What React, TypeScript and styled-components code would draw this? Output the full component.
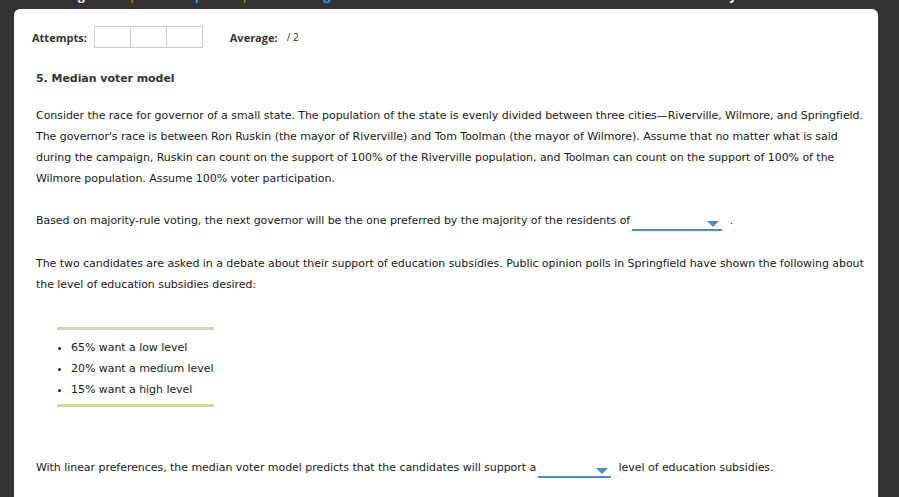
import styled, { createGlobalStyle } from 'styled-components'

const GlobalStyle = createGlobalStyle`
  html, body {
    margin: 0;
    padding: 0;
    background: #333333;
    overflow: hidden;
  }
`

const Page = styled.div`
  width: 899px;
  height: 497px;
  background: #333333;
  display: flex;
  flex-direction: column;
`

const TopBar = styled.div`
  height: 9px;
  overflow: hidden;
  padding: 0 37px 0 15px;
`

const TopRow = styled.div`
  display: flex;
  justify-content: space-between;
  margin-top: -11px;
  line-height: 14px;
  font-family: 'Open Sans', 'DejaVu Sans', sans-serif;
  font-weight: 700;
  font-size: 12px;
  color: #ffffff;
`

const Sep = styled.span`
  color: #e8b838;
  margin: 0 4px;
  font-weight: 400;
`

const NavLink = styled.span`
  color: #2ea6e8;
`

const Card = styled.div`
  margin: 0 21px 0 14px;
  flex: 1;
  background: #ffffff;
  border-radius: 6px 6px 0 0;
  padding: 17px 0 0 22px;
  font-family: 'DejaVu Sans', Verdana, sans-serif;
  font-size: 11px;
  letter-spacing: -0.05px;
  color: #1a1a1a;
  overflow: hidden;
`

const AttemptsRow = styled.div`
  display: flex;
  align-items: center;
  height: 22px;
  margin-left: -4px;
  font-family: 'Open Sans', 'DejaVu Sans', sans-serif;
  letter-spacing: 0;
  color: #333333;
`

const Label = styled.span`
  font-weight: 700;
  font-size: 11px;
  margin-right: 7px;
`

const Boxes = styled.div`
  display: flex;
  border: 1px solid #cccccc;
  margin-right: 27px;
`

const Box = styled.div<{ $last?: boolean }>`
  width: 35px;
  height: 20px;
  border-right: ${(p) => (p.$last ? 'none' : '1px solid #cccccc')};
`

const Score = styled.span`
  font-size: 10px;
  margin-left: 2px;
`

const Heading = styled.h2`
  margin: 24px 0 0;
  font-size: 11px;
  font-weight: 700;
  color: #333333;
  line-height: 14px;
`

const Para = styled.p<{ $top: number }>`
  margin: ${(p) => p.$top}px 0 0;
  line-height: 21px;
  white-space: nowrap;
`

const Select = styled.span<{ $w: number }>`
  display: inline-flex;
  justify-content: flex-end;
  align-items: center;
  width: ${(p) => p.$w}px;
  height: 12px;
  border-bottom: 2px solid #4a8fcb;
  vertical-align: -3px;
  margin: 0 4px 0 2px;
  padding-right: 3px;
  box-sizing: border-box;
`

const Arrow = styled.span`
  width: 0;
  height: 0;
  border-left: 6px solid transparent;
  border-right: 6px solid transparent;
  border-top: 6px solid #4a8fcb;
`

const Table = styled.div`
  margin: 32px 0 0 21px;
  width: 157px;
  border-top: 3px solid #ddd3a3;
  border-bottom: 3px solid #ddd3a3;
  padding: 7px 0 4px;
`

const List = styled.ul`
  margin: 0;
  padding: 0 0 0 14px;
  line-height: 21px;
  white-space: nowrap;
`

export default function App() {
  return (
    <Page>
      <GlobalStyle />
      <TopBar>
        <TopRow>
          <span>
            Grade Assignment<Sep>|</Sep>
            <NavLink>Read Chapter 16</NavLink>
            <Sep>|</Sep>
            <NavLink>Back to Assignment</NavLink>
          </span>
          <span>Due Sunday 04/22/18 at 11:45 PM</span>
        </TopRow>
      </TopBar>
      <Card>
        <AttemptsRow>
          <Label>Attempts:</Label>
          <Boxes>
            <Box />
            <Box />
            <Box $last />
          </Boxes>
          <Label>Average:</Label>
          <Score>/ 2</Score>
        </AttemptsRow>
        <Heading>5. Median voter model</Heading>
        <Para $top={19}>
          Consider the race for governor of a small state. The population of the state is evenly divided between three
          cities—Riverville, Wilmore, and Springfield.
          <br />
          The governor's race is between Ron Ruskin (the mayor of Riverville) and Tom Toolman (the mayor of Wilmore).
          Assume that no matter what is said
          <br />
          during the campaign, Ruskin can count on the support of 100% of the Riverville population, and Toolman can
          count on the support of 100% of the
          <br />
          Wilmore population. Assume 100% voter participation.
        </Para>
        <Para $top={21}>
          Based on majority-rule voting, the next governor will be the one preferred by the majority of the residents of
          <Select $w={90}>
            <Arrow />
          </Select>{' '}
          .
        </Para>
        <Para $top={22}>
          The two candidates are asked in a debate about their support of education subsidies. Public opinion polls in
          Springfield have shown the following about
          <br />
          the level of education subsidies desired:
        </Para>
        <Table>
          <List>
            <li>65% want a low level</li>
            <li>20% want a medium level</li>
            <li>15% want a high level</li>
          </List>
        </Table>
        <Para $top={50}>
          With linear preferences, the median voter model predicts that the candidates will support a
          <Select $w={73}>
            <Arrow />
          </Select>{' '}
          level of education subsidies.
        </Para>
      </Card>
    </Page>
  )
}
